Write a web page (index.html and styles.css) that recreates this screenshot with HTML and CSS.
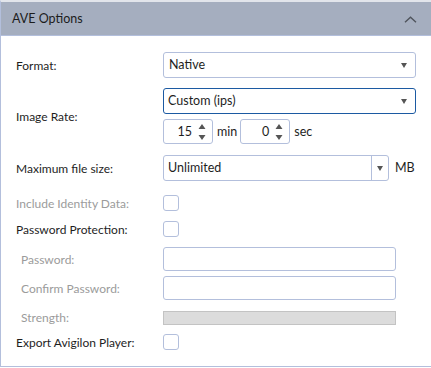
FILE: index.html
```html
<!DOCTYPE html>
<html lang="en">
<head>
  <meta charset="UTF-8">
  <title>AVE Options</title>
  <link rel="stylesheet" href="styles.css">
</head>
<body>

<div class="panel">
  <div class="panel-head">
    <span class="panel-title">AVE Options</span>
    <svg class="chevron" width="13" height="7" viewBox="0 0 13 7"><path d="M1 6.2 L6.5 1.2 L12 6.2" fill="none" stroke="#4f545c" stroke-width="1.4"/></svg>
  </div>

  <div class="panel-body">
    <div class="row row-format">
      <label>Format:</label>
      <div class="select">Native<span class="arrow"></span></div>
    </div>

    <div class="row row-rate">
      <label>Image Rate:</label>
      <div class="rate">
        <div class="select focused">Custom (ips)<span class="arrow"></span></div>
        <div class="spins">
          <div class="spin"><span class="val">15</span><svg width="8" height="18" viewBox="0 0 8 18"><path d="M4 1 L7.5 6 L0.5 6 Z M0.5 12 L7.5 12 L4 17 Z" fill="#555"/></svg></div>
          <span class="unit">min</span>
          <div class="spin"><span class="val">0</span><svg width="8" height="18" viewBox="0 0 8 18"><path d="M4 1 L7.5 6 L0.5 6 Z M0.5 12 L7.5 12 L4 17 Z" fill="#555"/></svg></div>
          <span class="unit">sec</span>
        </div>
      </div>
    </div>

    <div class="row row-size">
      <label>Maximum file size:</label>
      <div class="combo-wrap">
        <div class="combo"><span class="combo-text">Unlimited</span><span class="combo-btn"><span class="arrow"></span></span></div>
        <span class="unit">MB</span>
      </div>
    </div>

    <div class="row row-check row-identity">
      <label class="muted">Include Identity Data:</label>
      <span class="check"></span>
    </div>

    <div class="row row-check row-protect">
      <label>Password Protection:</label>
      <span class="check"></span>
    </div>

    <div class="row row-field row-pass">
      <label class="muted sub">Password:</label>
      <div class="field"></div>
    </div>

    <div class="row row-field row-confirm">
      <label class="muted sub">Confirm Password:</label>
      <div class="field"></div>
    </div>

    <div class="row row-strength">
      <label class="muted sub">Strength:</label>
      <div class="strength"></div>
    </div>

    <div class="row row-check row-player">
      <label>Export Avigilon Player:</label>
      <span class="check"></span>
    </div>
  </div>
</div>

</body>
</html>
```

FILE: styles.css
```css
body {
  margin: 0;
  background: white;
  font-family: Lato, "Noto Sans", sans-serif;
  font-size: 12px;
  line-height: 16px;
  color: #1e1e1e;
}

.panel {
  width: 431px;
  height: 367px;
  box-sizing: border-box;
  border-top: 2px solid #e2e5eb;
  border-left: 1px solid #b3bfdc;
  border-bottom: 1px solid #b3bfdc;
}

.panel-head {
  height: 33px;
  background: #a5aebf;
  border-bottom: 1px solid #b3bfdc;
  display: flex;
  align-items: center;
  justify-content: space-between;
  padding: 0 14px 0 11px;
}

.panel-title {
  font-size: 12.5px;
  color: #1c1c1c;
}

.chevron {
  margin-top: 2px;
}

.panel-body {
  padding: 16px 0 0 15px;
  display: flex;
  flex-direction: column;
}

.row {
  display: grid;
  grid-template-columns: 147px 1fr;
  align-items: center;
}

.row label {
  line-height: 14px;
  padding-top: 1px;
}

.row label.muted {
  color: #9b9b9b;
}

.row label.sub {
  padding-left: 5px;
}

.select {
  height: 26px;
  box-sizing: border-box;
  width: 253px;
  border: 1px solid #b3bfdc;
  border-radius: 3px;
  display: flex;
  align-items: center;
  padding-left: 5px;
  position: relative;
  font-size: 12.5px;
}

.select.focused {
  border-color: #1c5aa2;
  padding-left: 4px;
}

.arrow {
  position: absolute;
  right: 8px;
  top: 10px;
  width: 0;
  height: 0;
  border-left: 3.5px solid transparent;
  border-right: 3.5px solid transparent;
  border-top: 5px solid #555;
}

.row-rate {
  margin-top: 10px;
}

.rate {
  display: flex;
  flex-direction: column;
  gap: 5px;
}

.spins {
  display: flex;
  align-items: center;
}

.spin {
  width: 50px;
  height: 25px;
  box-sizing: border-box;
  border: 1px solid #b3bfdc;
  border-radius: 3px;
  display: flex;
  align-items: center;
  justify-content: flex-end;
  padding-right: 6px;
  gap: 6px;
}

.spin .val {
  font-size: 12.5px;
}

.unit {
  padding: 0 3px 0 4px;
  font-size: 12.5px;
}

.row-size {
  margin-top: 11px;
}

.combo-wrap {
  display: flex;
  align-items: center;
}

.combo {
  width: 226px;
  height: 26px;
  box-sizing: border-box;
  border: 1px solid #b3bfdc;
  border-radius: 3px;
  display: flex;
  align-items: center;
}

.combo-text {
  flex: 1;
  padding-left: 4px;
  font-size: 12.5px;
}

.combo-btn {
  width: 16px;
  height: 100%;
  border-left: 1px solid #b3bfdc;
  position: relative;
}

.combo-btn .arrow {
  right: 5px;
}

.combo-wrap .unit {
  padding-left: 6px;
}

.check {
  width: 16px;
  height: 16px;
  box-sizing: border-box;
  border: 1px solid #b3bfdc;
  border-radius: 3px;
}

.row-identity {
  margin-top: 14px;
}

.row-protect {
  margin-top: 10px;
}

.field {
  width: 233px;
  height: 24px;
  box-sizing: border-box;
  border: 1px solid #b3bfdc;
  border-radius: 3px;
}

.row-pass {
  margin-top: 10px;
}

.row-confirm {
  margin-top: 5px;
}

.row-strength {
  margin-top: 10px;
}

.strength {
  width: 233px;
  height: 14px;
  box-sizing: border-box;
  background: #dcdcdc;
  border: 1px solid #c3c3c3;
}

.row-player {
  margin-top: 9px;
}
```
